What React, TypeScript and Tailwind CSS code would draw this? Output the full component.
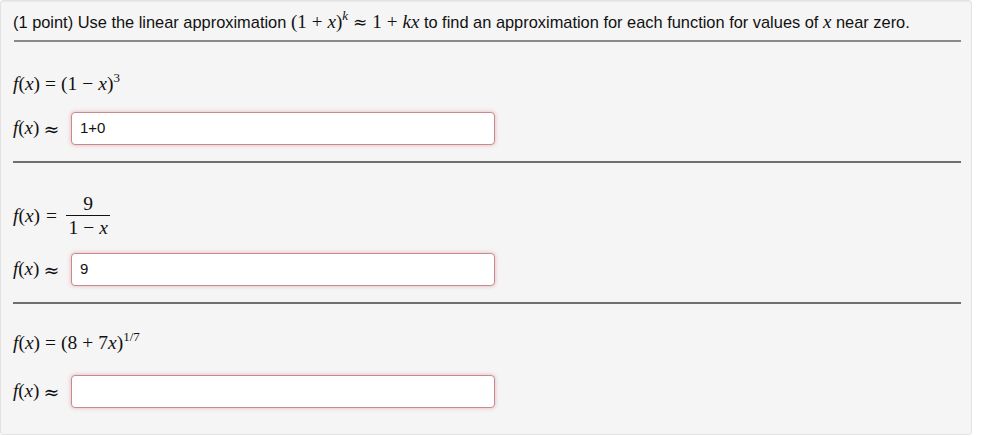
import React from "react";

const serif = { fontFamily: '"Liberation Serif", "Times New Roman", serif' };
const rel = { fontFamily: '"DejaVu Serif", "Liberation Serif", serif' };

function Fx() {
  return (
    <span style={serif} className="whitespace-nowrap">
      <i>f</i>(<i>x</i>)
    </span>
  );
}

function Op({ c }: { c: string }) {
  return <span className="mx-[5px]">{c}</span>;
}

function AnswerRow({ value }: { value: string }) {
  return (
    <div className="flex items-center h-[33px]">
      <div style={serif} className="text-[19px] text-[#111] w-[58px] whitespace-nowrap flex items-center">
        <Fx />
        <span style={rel} className="ml-[4px] text-[19px] leading-[20px]">≈</span>
      </div>
      <div className="w-[424px] h-[33px] bg-white border border-[#c98a8f] rounded-[4px] shadow-[0_0_4px_rgba(200,60,60,0.35)] flex items-center pl-[8px] text-[15px] text-[#111]" style={{ fontFamily: '"Liberation Sans", Arial, sans-serif' }}>
        {value}
      </div>
    </div>
  );
}

export default function App() {
  return (
    <div className="w-[984px] h-[436px] bg-white">
      <div className="w-[972px] h-[435px] bg-[#f5f5f5] border border-[#e3e3e3] rounded-[3px] shadow-[inset_0_1px_1px_rgba(0,0,0,0.05)] pl-[12px] pr-[10px] flex flex-col" style={{ fontFamily: '"Liberation Sans", Arial, sans-serif' }}>
        <div className="pt-[10px] h-[32px] leading-[22px] text-[16.4px] text-[#111] whitespace-nowrap">
          (1 point) Use the linear approximation{" "}
          <span style={serif} className="text-[19px]">
            (1<Op c="+" /><i>x</i>)<sup className="text-[13px] relative top-[-8px]"><i>k</i></sup>
            <span style={rel} className="mx-[5px] text-[17px]">≈</span>1<Op c="+" /><i>kx</i>
          </span>{" "}
          to find an approximation for each function for values of{" "}
          <span style={serif} className="text-[19px]"><i>x</i></span> near zero.
        </div>
        <div className="mt-[7px] h-[2px] bg-[#8a8a8a] ml-[1px]" />

        <div className="mt-[30px] h-[24px] leading-[24px] text-[19.5px] text-[#111]" style={serif}>
          <Fx /><Op c="=" />(1<Op c="−" /><i>x</i>)<sup className="text-[13px] relative top-[-8px]">3</sup>
        </div>
        <div className="mt-[16px]">
          <AnswerRow value="1+0" />
        </div>
        <div className="mt-[16px] h-[2px] bg-[#6f6f6f]" />

        <div className="mt-[32px] flex items-center h-[42px] text-[19.5px] text-[#111]" style={serif}>
          <Fx />
          <span className="ml-[6px]">=</span>
          <span className="ml-[9px] inline-flex flex-col items-center w-[44px]">
            <span className="leading-[18px]">9</span>
            <span className="w-full h-[1px] bg-[#111] my-[2px]" />
            <span className="leading-[20px] whitespace-nowrap">1<Op c="−" /><i>x</i></span>
          </span>
        </div>
        <div className="mt-[16px]">
          <AnswerRow value="9" />
        </div>
        <div className="mt-[16px] h-[2px] bg-[#6f6f6f]" />

        <div className="mt-[27px] h-[24px] leading-[24px] text-[19.5px] text-[#111]" style={serif}>
          <Fx /><Op c="=" />(8<Op c="+" />7<i>x</i>)<sup className="text-[13px] relative top-[-8px]">1/7</sup>
        </div>
        <div className="mt-[20px]">
          <AnswerRow value="" />
        </div>
      </div>
    </div>
  );
}
